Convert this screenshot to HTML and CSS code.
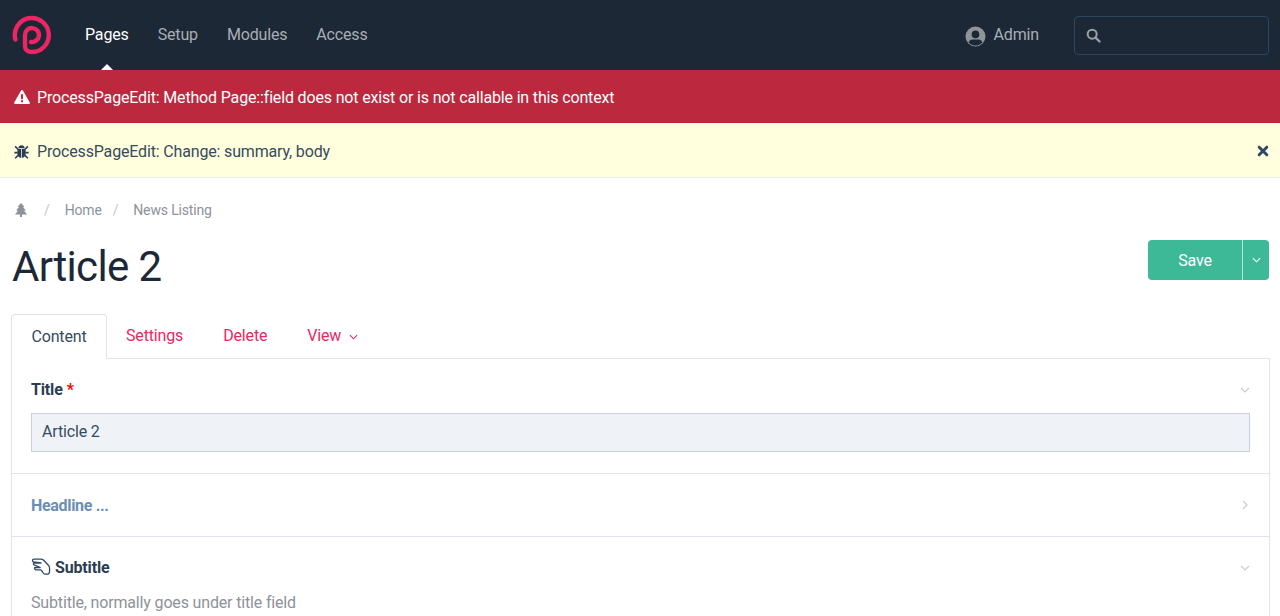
FILE: index.html
```html
<!DOCTYPE html>
<html lang="en">
<head>
<meta charset="utf-8">
<title>Article 2</title>
<link rel="stylesheet" href="styles.css">
</head>
<body>
<header class="masthead">
  <svg class="logo" viewBox="0 0 40 40" width="40" height="40"><path d="M3.4 24.5A17 17 0 1 1 20 37C16 37 13 35 13 31V20A7 7 0 1 1 19 27" fill="none" stroke="#ed2663" stroke-width="4.4" stroke-linecap="round"/></svg>
  <nav class="topnav">
    <a class="topnav-item active">Pages</a>
    <a class="topnav-item">Setup</a>
    <a class="topnav-item">Modules</a>
    <a class="topnav-item">Access</a>
  </nav>
  <div class="user">
    <svg class="user-icon" viewBox="0 0 22 22" width="21" height="21"><circle cx="11" cy="11" r="10.5" fill="#8d949c"/><circle cx="11" cy="8.8" r="4" fill="#1c2836"/><path d="M3.8 17.2C5 13.8 8 14.2 11 14.2S17 13.8 18.2 17.2A9.6 9.6 0 0 1 3.8 17.2Z" fill="#1c2836"/></svg>
    <span>Admin</span>
  </div>
  <div class="search">
    <svg viewBox="0 0 16 16" width="15" height="15"><circle cx="6.6" cy="6.6" r="4.8" fill="none" stroke="#9a9fa6" stroke-width="2.2"/><path d="M10.2 10.2L14.4 14.4" stroke="#9a9fa6" stroke-width="2.6" stroke-linecap="round"/></svg>
  </div>
</header>

<div class="alert alert-error">
  <svg class="alert-icon" viewBox="0 0 16 16" width="16" height="16"><path fill-rule="evenodd" d="M8 1C8.4 1 8.7 1.2 8.9 1.6L15.8 13.6C16.2 14.3 15.7 15 15 15H1C.3 15 -.2 14.3 .2 13.6L7.1 1.6C7.3 1.2 7.6 1 8 1ZM6.9 5.2L7.1 10.2H8.9L9.1 5.2ZM7 11.2V13.2H9V11.2Z" fill="#fff"/></svg>
  <span>ProcessPageEdit: Method Page::field does not exist or is not callable in this context</span>
</div>
<div class="alert alert-debug">
  <svg class="alert-icon" viewBox="0 0 16 16" width="15" height="15"><g fill="#2a3d52"><path d="M4.6 4.4C4.6 2.4 6.1 1.2 8 1.2S11.4 2.4 11.4 4.4Z"/><path d="M3.6 5.2H7.6V14.8C5.2 14.6 3.6 12.8 3.6 10.5ZM8.4 5.2H12.4V10.5C12.4 12.8 10.8 14.6 8.4 14.8Z"/></g><path d="M1.2 2.6L4.2 5.6M14.8 2.6L11.8 5.6M.4 9.2H4M15.6 9.2H12M1.2 15.2L4.4 12.2M14.8 15.2L11.6 12.2" stroke="#2a3d52" stroke-width="1.7" fill="none"/></svg>
  <span>ProcessPageEdit: Change: summary, body</span>
  <svg class="alert-close" viewBox="0 0 12 12" width="12" height="12"><path d="M2.2 2.2L9.8 9.8M9.8 2.2L2.2 9.8" stroke="#2f4a66" stroke-width="3" stroke-linecap="round"/></svg>
</div>

<main class="page">
  <ul class="crumbs">
    <li class="crumb-home"><svg viewBox="0 0 12 14" width="12" height="14"><path d="M6 0L9.5 4H8L11 7.6H9L12 11.4H7V14H5V11.4H0L3 7.6H1L4 4H2.5Z" fill="#8d929b"/></svg></li>
    <li class="sep">/</li>
    <li>Home</li>
    <li class="sep">/</li>
    <li>News Listing</li>
  </ul>
  <div class="headline">
    <h1>Article 2</h1>
    <div class="save">
      <span class="save-main">Save</span>
      <span class="save-drop"><svg viewBox="0 0 10 6" width="9" height="6"><path d="M1 1L5 5L9 1" fill="none" stroke="#fff" stroke-width="1.2"/></svg></span>
    </div>
  </div>
  <div class="tabs">
    <a class="tab current">Content</a>
    <a class="tab">Settings</a>
    <a class="tab">Delete</a>
    <a class="tab">View <svg class="tab-caret" viewBox="0 0 10 6" width="9" height="6"><path d="M1 1L5 5L9 1" fill="none" stroke="#ed2663" stroke-width="1.2"/></svg></a>
  </div>
  <div class="panel">
    <section class="field field-title">
      <div class="field-head">
        <label class="field-label">Title <span class="req">*</span></label>
        <svg class="chev" viewBox="0 0 10 6" width="10" height="6"><path d="M1 1L5 5L9 1" fill="none" stroke="#c4ccd6" stroke-width="1.2"/></svg>
      </div>
      <div class="text-input">Article 2</div>
    </section>
    <section class="field field-closed">
      <div class="field-head">
        <label class="field-label muted">Headline ...</label>
        <svg class="chev chev-right" viewBox="0 0 6 10" width="6" height="10"><path d="M1 1L5 5L1 9" fill="none" stroke="#c4ccd6" stroke-width="1.2"/></svg>
      </div>
    </section>
    <section class="field field-sub">
      <div class="field-head">
        <label class="field-label"><svg class="lang" viewBox="0 0 20 18" width="20" height="18"><path d="M1.5 2.5C1.5 1.5 2 1.2 3 1.2H10C11.5 1.2 12.5 1.8 13.5 3L18 8C18.6 9 18.7 11 18.5 14C18.4 15.5 17.5 16.2 16 16.2H14C13 16.2 12.4 15.4 11.6 14L10 11.8H5.2C4 11.8 3.4 10.6 3.6 9.6H9.2L3 6.8C2 6.2 2.4 5 3.4 5H10L2.6 4C1.8 3.8 1.5 3.2 1.5 2.5Z" fill="none" stroke="#2f4a66" stroke-width="1.3" stroke-linejoin="round"/></svg>Subtitle</label>
        <svg class="chev" viewBox="0 0 10 6" width="10" height="6"><path d="M1 1L5 5L9 1" fill="none" stroke="#c4ccd6" stroke-width="1.2"/></svg>
      </div>
      <p class="note">Subtitle, normally goes under title field</p>
    </section>
  </div>
</main>
</body>
</html>
```
FILE: styles.css
```css
* { box-sizing: border-box; }
html, body { margin: 0; padding: 0; height: 616px; overflow: hidden; }
body { font-family: Roboto, "Liberation Sans", sans-serif; font-size: 16px; letter-spacing: -0.01em; color: #354b60; background: #fff; }

.masthead { height: 70px; background: #1c2836; display: flex; align-items: center; padding: 0 11px 0 12px; }
.logo { flex: none; }
.topnav { display: flex; gap: 29px; margin-left: 33px; flex: 1; }
.topnav-item { position: relative; color: #a9aeb4; line-height: 24px; }
.topnav-item.active { color: #fff; }
.topnav-item.active::after { content: ""; position: absolute; left: 50%; bottom: -23px; margin-left: -6px; border: 6px solid transparent; border-top: 0; border-bottom: 6px solid #fff; }
.user { display: flex; align-items: center; gap: 8px; color: #a9aeb4; margin-right: 35px; }
.user span { position: relative; top: -1px; }
.user-icon { margin-top: 2px; }
.search { width: 195px; height: 39px; border: 1px solid #2d4560; border-radius: 4px; display: flex; align-items: center; padding-left: 11px; }

.alert { display: flex; align-items: center; padding: 2px 11px 0 14px; }
.alert-icon { flex: none; margin-right: 7px; }
.alert-error { height: 53px; background: #bc283e; color: #fff; border-bottom: 1px solid #c0213b; }
.alert-debug { height: 55px; background: #ffd; color: #354b60; border-bottom: 1px solid #e8ebee; }
.alert-debug .alert-icon { margin-right: 8px; }
.alert-close { margin-left: auto; }

.page { padding: 0 10px 0 11px; }
.crumbs { list-style: none; margin: 0; padding: 8px 0 0 4px; display: flex; align-items: center; font-size: 14px; color: #8d929b; height: 56px; }
.crumbs li { line-height: 16px; }
.crumb-home { display: flex; margin-right: 6px; }
.crumbs .sep { color: #c4c8ce; margin: 0 15px 0 11px; }
.headline { display: flex; align-items: center; justify-content: space-between; height: 80px; padding: 0 1px 15px 0; }
h1 { margin: 0 0 0 1px; font-size: 42px; font-weight: 400; line-height: 50px; letter-spacing: -0.015em; color: #1c2836; }
.save { display: flex; align-self: flex-start; margin-top: 6px; height: 40px; width: 121px; background: #3eb998; border-radius: 4px; color: #fff; }
.save-main { flex: 1; display: flex; align-items: center; justify-content: center; }
.save-drop { width: 27px; display: flex; align-items: center; justify-content: center; border-left: 1px solid #b5e3d6; }

.tabs { display: flex; height: 45px; position: relative; }
.tab { display: flex; align-items: center; color: #ed2663; padding: 0 20px 2px; white-space: pre; }
.tab.current { width: 96px; justify-content: center; color: #354b60; background: #fff; border: 1px solid #dfe4ec; border-bottom: 0; border-radius: 4px 4px 0 0; position: relative; z-index: 1; height: 45px; padding: 0 0 2px; margin-right: -1px; }
.tab-caret { margin-left: 4px; margin-top: 2px; }

.panel { border: 1px solid #dfe4ec; border-bottom: 0; margin-top: -1px; height: 258px; }
.field { border-bottom: 1px solid #dfe4ec; padding: 0 19px; }
.field-sub { border-bottom: 0; }
.field-head { display: flex; align-items: center; justify-content: space-between; height: 24px; }
.field-label { font-weight: 700; display: flex; align-items: center; gap: 4px; color: #2a3d52; }
.field-label.muted { color: #6b8fb5; letter-spacing: -0.02em; }
.req { color: #f00; }
.chev { margin-top: 2px; }
.chev-right { margin: 0 2px 0 0; }
.field-title { padding-top: 18px; height: 115px; }
.text-input { margin-top: 12px; height: 39px; background: #eff3f8; border: 1px solid #c5d0dc; padding: 0 10px 2px; display: flex; align-items: center; color: #354b60; }
.field-closed { padding-top: 19px; height: 63px; }
.field-sub { padding-top: 18px; }
.lang { flex: none; }
.note { margin: 12px 0 0; color: #8d929b; line-height: 24px; }
```
